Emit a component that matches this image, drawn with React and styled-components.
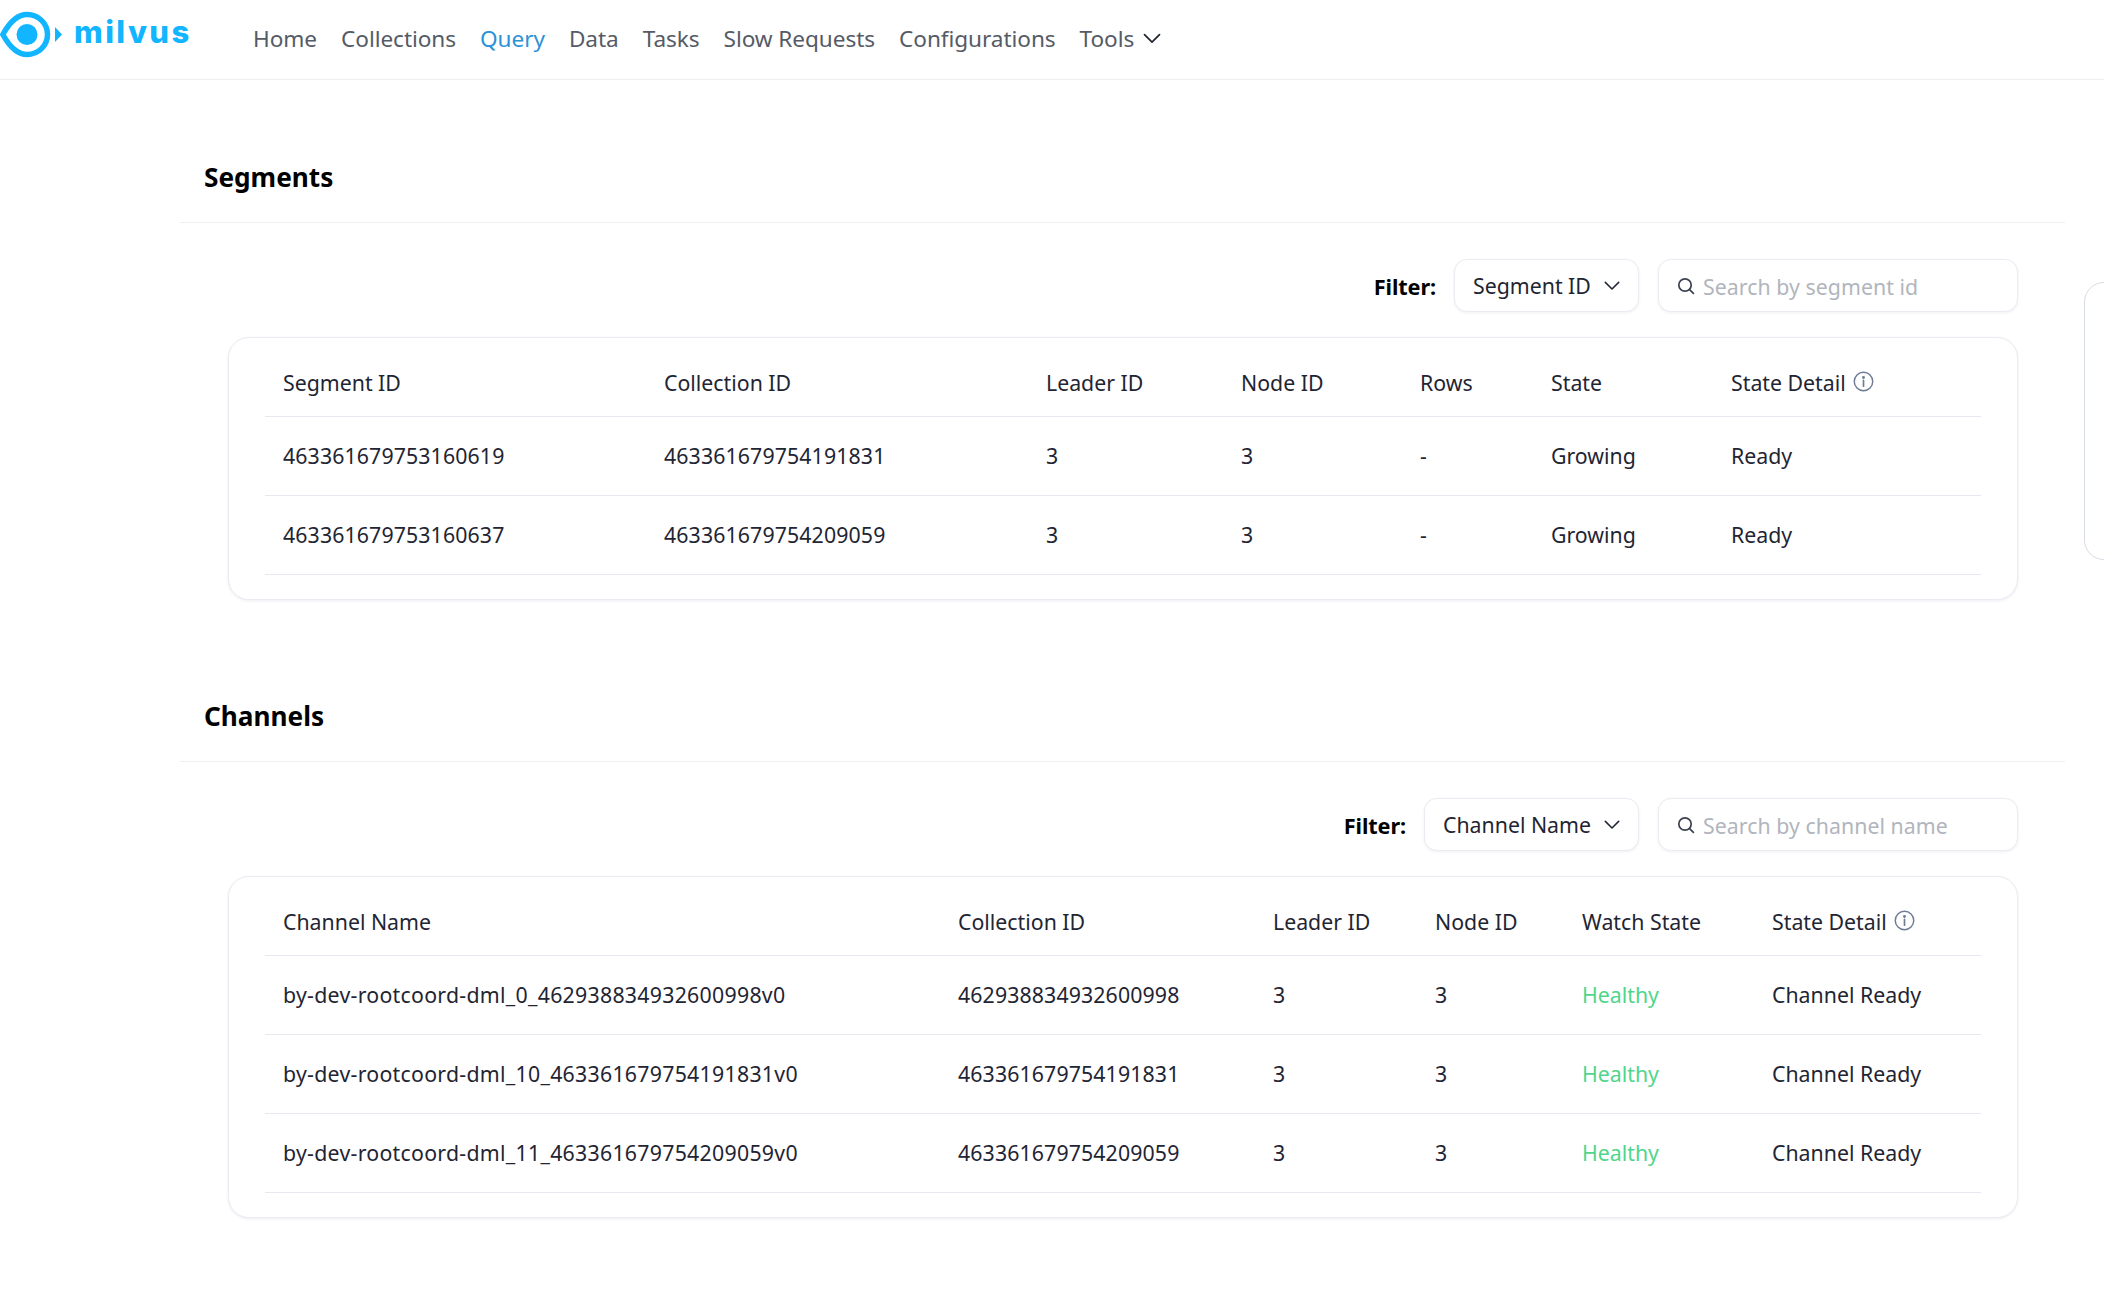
import React from 'react';
import styled, { createGlobalStyle } from 'styled-components';

const Global = createGlobalStyle`
  html, body { margin: 0; padding: 0; background: #fff; }
  body { font-family: "Noto Sans", "Open Sans", sans-serif; color: #1f2533; }
`;
const Page = styled.div`
  position: relative;
  width: 2104px;
  height: 1300px;
  overflow: hidden;
  background: #fff;
`;
const Header = styled.header`
  height: 79px;
  display: flex;
  align-items: center;
  border-bottom: 1px solid #eeeeee;
`;
const Logo = styled.div`
  width: 253px;
  height: 79px;
  display: flex;
  align-items: flex-start;
  flex: none;
`;
const LogoMark = styled.svg`
  width: 63px;
  height: 70px;
  flex: none;
`;
const LogoText = styled.span`
  font-family: "Inter", sans-serif;
  font-weight: 800;
  font-size: 31px;
  line-height: 38px;
  letter-spacing: 2.4px;
  color: #12b5ff;
  margin: 13px 0 0 11px;
`;
const Nav = styled.nav`
  display: flex;
  align-items: center;
  gap: 24px;
  margin-top: -2px;
`;
const NavItem = styled.a`
  display: flex;
  align-items: center;
  gap: 9px;
  font-size: 22.6px;
  line-height: 28px;
  letter-spacing: -0.06px;
  color: ${p => (p.$active ? '#2b92d6' : '#555b66')};
`;
const Section = styled.section`
  margin: ${p => p.$top}px 39px 0 180px;
`;
const SectionHead = styled.div`
  height: 79px;
  padding-left: 24px;
  display: flex;
  align-items: center;
  border-bottom: 1px solid #eeeff1;
`;
const Title = styled.h2`
  margin: 0;
  font-size: 26.2px;
  line-height: 34px;
  font-weight: 700;
  color: #000;
  position: relative;
  top: -6px;
`;
const FilterBar = styled.div`
  display: flex;
  align-items: center;
  justify-content: flex-end;
  gap: 18px;
  margin: 36px 47px 25px 48px;
`;
const FilterLabel = styled.label`
  font-size: 21.7px;
  font-weight: 700;
  letter-spacing: -0.1px;
  color: #000;
  position: relative;
  top: 1px;
`;
const Select = styled.div`
  box-sizing: border-box;
  width: ${p => p.$w}px;
  height: 53px;
  padding: 0 18px;
  display: flex;
  align-items: center;
  justify-content: space-between;
  background: #fff;
  border: 1px solid #eaecf2;
  border-radius: 13px;
  box-shadow: 0 1px 3px rgba(40, 60, 110, 0.08);
  font-size: 21.3px;
  color: #1f2533;
`;
const Search = styled.div`
  box-sizing: border-box;
  width: 360px;
  height: 53px;
  margin-left: 1px;
  padding: 0 18px;
  display: flex;
  align-items: center;
  gap: 8px;
  background: #fff;
  border: 1px solid #eaecf2;
  border-radius: 13px;
  box-shadow: 0 1px 3px rgba(40, 60, 110, 0.08);
`;
const Placeholder = styled.span`
  font-size: 21.3px;
  letter-spacing: 0.05px;
  color: #b1b5bd;
  position: relative;
  top: 1px;
`;
const Card = styled.div`
  margin: 0 47px 0 48px;
  padding: 0 36px 24px;
  background: #fff;
  border: 1px solid #eaecf2;
  border-radius: 21px;
  box-shadow: 0 1px 3px rgba(40, 60, 110, 0.09);
`;
const Table = styled.table`
  width: 100%;
  table-layout: fixed;
  border-collapse: collapse;
`;
const Col = styled.col`
  width: ${p => p.$w}px;
`;
const Th = styled.th`
  height: 68px;
  padding: 10px 0 0 18px;
  text-align: left;
  font-weight: 400;
  font-size: 21.3px;
  color: #1f2533;
  border-bottom: 1px solid #e6e9f0;
  white-space: nowrap;
`;
const Td = styled.td`
  height: 77px;
  padding: 0 0 1px 18px;
  font-size: 21.3px;
  letter-spacing: ${p => p.$ls}px;
  color: ${p => (p.$ok ? '#4fd68a' : '#1f2533')};
  border-bottom: 1px solid #e6e9f0;
  white-space: nowrap;
`;
const InfoIcon = styled.svg`
  width: 21px;
  height: 21px;
  margin-left: 7px;
  vertical-align: -2px;
  position: relative;
  top: -1px;
`;
const SideTab = styled.div`
  position: absolute;
  left: 2084px;
  top: 282px;
  width: 40px;
  height: 278px;
  box-sizing: border-box;
  border: 1px solid #d8dce6;
  border-radius: 20px 0 0 20px;
  background: #fff;
`;

const Chevron = ({ size = 18 }) => (
  <svg width={size} height={size * 0.62} viewBox="0 0 18 11" fill="none" stroke="#1f2533" strokeWidth="1.7" strokeLinecap="round" strokeLinejoin="round" style={{ flex: 'none' }}>
    <path d="M1.5 1.5 L9 9 L16.5 1.5" />
  </svg>
);
const SearchIcon = () => (
  <svg width="18" height="18" viewBox="0 0 18 18" fill="none" stroke="#3a4150" strokeWidth="1.7" strokeLinecap="round" style={{ flex: 'none' }}>
    <circle cx="8" cy="8" r="6.2" />
    <path d="M12.6 12.6 L16.4 16.4" />
  </svg>
);
const Info = () => (
  <InfoIcon viewBox="0 0 20 20" fill="none" stroke="#6f7c96" strokeWidth="1.4">
    <circle cx="10" cy="10" r="8.8" />
    <path d="M10 9 V14.5" strokeLinecap="round" strokeWidth="1.6" />
    <circle cx="10" cy="6.2" r="0.7" fill="#6f7c96" />
  </InfoIcon>
);

const segmentCols = [381, 382, 195, 179, 131, 180, 268];
const channelCols = [675, 315, 162, 147, 190, 227];
const segHead = ['Segment ID', 'Collection ID', 'Leader ID', 'Node ID', 'Rows', 'State', 'State Detail'];
const chanHead = ['Channel Name', 'Collection ID', 'Leader ID', 'Node ID', 'Watch State', 'State Detail'];
const segRows = [
  ['463361679753160619', '463361679754191831', '3', '3', '-', 'Growing', 'Ready'],
  ['463361679753160637', '463361679754209059', '3', '3', '-', 'Growing', 'Ready'],
];
const chanRows = [
  ['by-dev-rootcoord-dml_0_462938834932600998v0', '462938834932600998', '3', '3', 'Healthy', 'Channel Ready'],
  ['by-dev-rootcoord-dml_10_463361679754191831v0', '463361679754191831', '3', '3', 'Healthy', 'Channel Ready'],
  ['by-dev-rootcoord-dml_11_463361679754209059v0', '463361679754209059', '3', '3', 'Healthy', 'Channel Ready'],
];

const spacingFor = c => {
  if (c.startsWith('by-dev')) return 0.27;
  if (/^\d{10,}$/.test(c)) return 0.12;
  return 0;
};

const DataTable = ({ cols, head, rows }) => (
  <Card>
    <Table>
      <colgroup>{cols.map((w, i) => <Col key={i} $w={w} />)}</colgroup>
      <thead>
        <tr>
          {head.map(h => (
            <Th key={h}>{h}{h === 'State Detail' && <Info />}</Th>
          ))}
        </tr>
      </thead>
      <tbody>
        {rows.map((r, i) => (
          <tr key={i}>
            {r.map((c, j) => <Td key={j} $ok={c === 'Healthy'} $ls={spacingFor(c)}>{c}</Td>)}
          </tr>
        ))}
      </tbody>
    </Table>
  </Card>
);

const Panel = ({ top, title, filter, filterW, placeholder, children }) => (
  <Section $top={top}>
    <SectionHead><Title>{title}</Title></SectionHead>
    <FilterBar>
      <FilterLabel>Filter:</FilterLabel>
      <Select $w={filterW}>{filter}<Chevron size={16} /></Select>
      <Search><SearchIcon /><Placeholder>{placeholder}</Placeholder></Search>
    </FilterBar>
    {children}
  </Section>
);

export default function App() {
  return (
    <Page>
      <Global />
      <Header>
        <Logo>
          <LogoMark viewBox="0 0 63 70" fill="none">
            <path d="M2.8 34.5 C7 27 11 22 15 19 C19 15.8 23 14.5 27 14.5 C38.5 14.5 47.5 23.5 47.5 34.5 C47.5 45.5 38.5 54.5 27 54.5 C23 54.5 19 53.2 15 50 C11 47 7 42 2.8 34.5 Z" stroke="#12b5ff" strokeWidth="5.5" strokeLinejoin="round" />
            <circle cx="27" cy="34.5" r="10.5" fill="#12b5ff" />
            <path d="M55 27 L62 34.5 L55 42 Z" fill="#12b5ff" />
          </LogoMark>
          <LogoText>milvus</LogoText>
        </Logo>
        <Nav>
          <NavItem>Home</NavItem>
          <NavItem>Collections</NavItem>
          <NavItem $active>Query</NavItem>
          <NavItem>Data</NavItem>
          <NavItem>Tasks</NavItem>
          <NavItem>Slow Requests</NavItem>
          <NavItem>Configurations</NavItem>
          <NavItem>Tools<Chevron /></NavItem>
        </Nav>
      </Header>
      <Panel top={63} title="Segments" filter="Segment ID" filterW={185} placeholder="Search by segment id">
        <DataTable cols={segmentCols} head={segHead} rows={segRows} />
      </Panel>
      <Panel top={82} title="Channels" filter="Channel Name" filterW={215} placeholder="Search by channel name">
        <DataTable cols={channelCols} head={chanHead} rows={chanRows} />
      </Panel>
      <SideTab />
    </Page>
  );
}
